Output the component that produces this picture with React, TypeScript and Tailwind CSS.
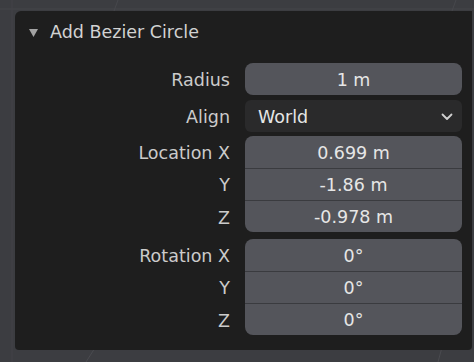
import React from "react";

const font = { fontFamily: '"DejaVu Sans", "Liberation Sans", sans-serif' };

function Label({ children }: { children: React.ReactNode }) {
  return (
    <div className="w-[215px] shrink-0 pt-[3px] text-right text-[17.5px] leading-none text-[#cbcbcb]">
      {children}
    </div>
  );
}

function NumRow({ value, first, last }: { value: string; first?: boolean; last?: boolean }) {
  return (
    <div
      className={
        "h-[32px] pt-[3px] flex items-center justify-center text-[17.5px] leading-none text-[#e6e6e6] bg-[#54555b] " +
        (first ? "rounded-t-[8px] " : "border-t border-[#3a3b3f] ") +
        (last ? "rounded-b-[8px]" : "")
      }
    >
      {value}
    </div>
  );
}

export default function App() {
  return (
    <div
      className="relative w-[474px] h-[362px] overflow-hidden bg-[#3c3d41] pt-[11px] pl-[15px] pr-[2px]"
      style={font}
    >
      <svg className="absolute inset-0" width="474" height="362">
        <line x1="0" y1="9" x2="474" y2="9" stroke="#45464b" strokeWidth="1" />
        <line x1="12" y1="0" x2="12" y2="362" stroke="#424348" strokeWidth="1" />
        <line x1="100" y1="340" x2="86" y2="362" stroke="#4a4b50" strokeWidth="1" />
        <line x1="444" y1="340" x2="438" y2="362" stroke="#4a4b50" strokeWidth="1" />
        <line x1="118" y1="0" x2="114" y2="11" stroke="#47484d" strokeWidth="1" />
        <line x1="456" y1="0" x2="452" y2="11" stroke="#47484d" strokeWidth="1" />
      </svg>
      <div className="relative h-[339px] bg-[#1e1e1e] rounded-tl-[6px] rounded-bl-[4px] rounded-br-[4px]">
        <div className="h-[40px] pt-[4px] flex items-center pl-[14px]">
          <svg width="9" height="8" viewBox="0 0 9 8" className="mr-[12px]">
            <polygon points="0,0 9,0 4.5,8" fill="#a3a3a3" />
          </svg>
          <span className="text-[17.5px] leading-none text-[#d2d2d2]">Add Bezier Circle</span>
        </div>
        <div className="pt-[12px] flex flex-col">
          <div className="flex items-center">
            <Label>Radius</Label>
            <div className="ml-[15px] w-[217px]">
              <NumRow value="1 m" first last />
            </div>
          </div>
          <div className="flex items-center mt-[5px]">
            <Label>Align</Label>
            <div className="ml-[15px] w-[217px] h-[32px] rounded-[6px] bg-[#2a2a2b] flex items-center justify-between pl-[13px] pr-[9px]">
              <span className="pt-[3px] text-[17.5px] leading-none text-[#e6e6e6]">World</span>
              <svg width="12" height="8" viewBox="0 0 12 8" className="mt-[2px]">
                <polyline points="1.5,1.5 6,6 10.5,1.5" fill="none" stroke="#d0d0d0" strokeWidth="1.8" strokeLinecap="round" strokeLinejoin="round" />
              </svg>
            </div>
          </div>
          <div className="flex mt-[4px]">
            <div className="flex flex-col">
              <div className="h-[32px] flex items-center"><Label>Location X</Label></div>
              <div className="h-[33px] flex items-center"><Label>Y</Label></div>
              <div className="h-[33px] flex items-center"><Label>Z</Label></div>
            </div>
            <div className="ml-[15px] w-[217px] flex flex-col">
              <NumRow value="0.699 m" first />
              <NumRow value="-1.86 m" />
              <NumRow value="-0.978 m" last />
            </div>
          </div>
          <div className="flex mt-[5px]">
            <div className="flex flex-col">
              <div className="h-[32px] flex items-center"><Label>Rotation X</Label></div>
              <div className="h-[33px] flex items-center"><Label>Y</Label></div>
              <div className="h-[33px] flex items-center"><Label>Z</Label></div>
            </div>
            <div className="ml-[15px] w-[217px] flex flex-col">
              <NumRow value="0°" first />
              <NumRow value="0°" />
              <NumRow value="0°" last />
            </div>
          </div>
        </div>
      </div>
    </div>
  );
}
